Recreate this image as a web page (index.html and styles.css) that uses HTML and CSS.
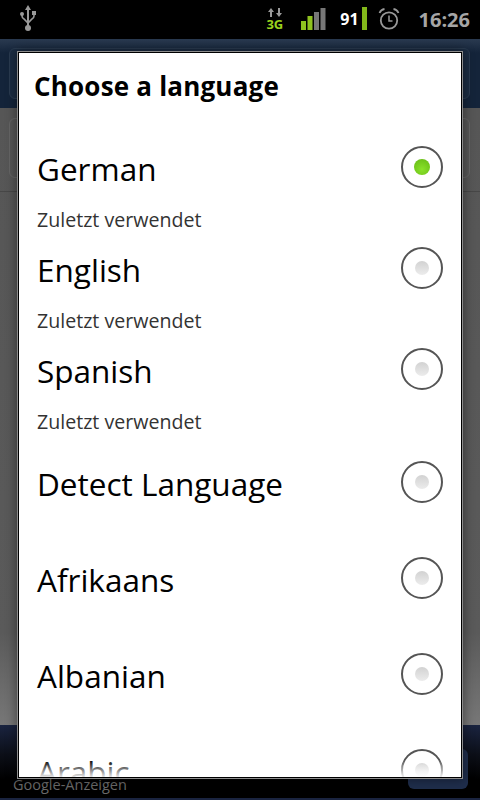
FILE: index.html
```html
<!DOCTYPE html>
<html lang="en">
  <head>
    <meta charset="UTF-8" />
    <title>Choose a language</title>
    <link rel="stylesheet" href="styles.css">
  </head>
  <body>
    <div id="screen">
      <!-- Status bar -->
      <div id="status-bar">
        <svg class="usb" width="18" height="28" viewBox="0 0 18 28">
          <path d="M9 1 L6 6 H8 V22 H10 V6 H12 Z" fill="#999" />
          <circle cx="9" cy="24" r="3" fill="#999" />
          <path d="M3 10 V12 Q3 14 5 15 L9 19 L13 15 Q15 14 15 12 V10" fill="none" stroke="#999" stroke-width="1.6" />
          <circle cx="3" cy="10" r="2" fill="#999" />
          <rect x="13" y="7" width="4" height="4" fill="#999" />
        </svg>
        <div class="status-right">
          <div class="net">
            <svg width="16" height="10" viewBox="0 0 16 10">
              <path d="M4 0 L7 4 H5 V9 H3 V4 H1 Z" fill="#999" />
              <path d="M12 9 L9 5 H11 V0 H13 V5 H15 Z" fill="#999" />
            </svg>
            <span class="net-label">3G</span>
          </div>
          <svg class="signal" width="25" height="22" viewBox="0 0 25 22">
            <rect x="0" y="13" width="5" height="9" fill="#8fc31f" />
            <rect x="6.5" y="8" width="5" height="14" fill="#8fc31f" />
            <rect x="13" y="4" width="5" height="18" fill="#777" />
            <rect x="19.5" y="0" width="5" height="22" fill="#777" />
          </svg>
          <span class="battery-num">91</span>
          <div class="battery-bar"></div>
          <svg class="alarm" width="22" height="22" viewBox="0 0 22 22">
            <circle cx="11" cy="12.5" r="8.2" fill="none" stroke="#999" stroke-width="1.8" />
            <path d="M11 7.5 V13 H14.5" fill="none" stroke="#999" stroke-width="1.5" />
            <path d="M1.5 5 Q3 1.5 6.5 1" fill="none" stroke="#999" stroke-width="1.8" />
            <path d="M20.5 5 Q19 1.5 15.5 1" fill="none" stroke="#999" stroke-width="1.8" />
          </svg>
          <span class="clock">16:26</span>
        </div>
      </div>

      <!-- Dimmed app behind the dialog -->
      <div id="backdrop">
        <div class="app-header">
          <div class="app-field"></div>
        </div>
        <div class="app-body">
          <div class="app-row">
            <div class="app-card"></div>
          </div>
        </div>
        <div class="app-footer">
          <span class="ad-label">Google-Anzeigen</span>
          <div class="ad-button"></div>
        </div>
      </div>

      <!-- Language dialog -->
      <div id="dialog">
        <h1 class="dialog-title">Choose a language</h1>
        <div class="lang-list">
          <div class="lang-item recent">
            <div class="lang-text">
              <span class="lang-name">German</span>
              <span class="lang-sub">Zuletzt verwendet</span>
            </div>
            <div class="radio checked"></div>
          </div>
          <div class="lang-item recent">
            <div class="lang-text">
              <span class="lang-name">English</span>
              <span class="lang-sub">Zuletzt verwendet</span>
            </div>
            <div class="radio"></div>
          </div>
          <div class="lang-item recent">
            <div class="lang-text">
              <span class="lang-name">Spanish</span>
              <span class="lang-sub">Zuletzt verwendet</span>
            </div>
            <div class="radio"></div>
          </div>
          <div class="lang-item">
            <span class="lang-name">Detect Language</span>
            <div class="radio"></div>
          </div>
          <div class="lang-item">
            <span class="lang-name">Afrikaans</span>
            <div class="radio"></div>
          </div>
          <div class="lang-item">
            <span class="lang-name">Albanian</span>
            <div class="radio"></div>
          </div>
          <div class="lang-item">
            <span class="lang-name">Arabic</span>
            <div class="radio"></div>
          </div>
        </div>
        <div class="list-fade"></div>
      </div>
    </div>
  </body>
</html>
```

FILE: styles.css
```css
/* Page */
body {
  margin: 0;
  overflow: hidden;
  background-color: #000;
  font-family: "Open Sans", "DejaVu Sans", sans-serif;
}

#screen {
  position: relative;
  width: 480px;
  height: 800px;
  display: flex;
  flex-direction: column;
  overflow: hidden;
}

/* Status bar */
#status-bar {
  height: 39px;
  flex-shrink: 0;
  display: flex;
  align-items: center;
  justify-content: space-between;
  padding: 0 10px 0 19px;
  background-color: #000;
}

.usb {
  margin-top: -3px;
}

.status-right {
  display: flex;
  align-items: center;
}

.net {
  display: flex;
  flex-direction: column;
  align-items: center;
  margin-right: 18px;
  margin-top: -1px;
}

.net-label {
  font-size: 13px;
  line-height: 12px;
  font-weight: 700;
  color: #9bd21d;
}

.signal {
  margin-right: 14px;
  margin-top: -1px;
}

.battery-num {
  font-size: 16px;
  font-weight: 700;
  color: #fff;
  margin-right: 3px;
  margin-top: -2px;
}

.battery-bar {
  width: 5px;
  height: 23px;
  margin-right: 11px;
  margin-top: -2px;
  background-color: #82b81a;
}

.alarm {
  margin-right: 19px;
  margin-top: -1px;
}

.clock {
  font-size: 20px;
  font-weight: 700;
  color: #a5a5a5;
  margin-top: -1px;
}

/* Dimmed app behind the dialog */
#backdrop {
  flex: 1;
  display: flex;
  flex-direction: column;
}

.app-header {
  height: 69px;
  padding: 9px 10px 0 9px;
  box-sizing: border-box;
  background: linear-gradient(to bottom, #2a3a50, #14243a 20%, #14243a);
}

.app-field {
  height: 49px;
  border: 1px solid #2a3b50;
  border-radius: 6px;
  background-color: #1b2c42;
}

.app-body {
  flex: 1;
  background: linear-gradient(to bottom, #565656, #5a5a5a 85%, #777);
}

.app-row {
  height: 84px;
  padding: 10px 10px 0 9px;
  box-sizing: border-box;
  border-bottom: 1px solid #474747;
}

.app-card {
  height: 58px;
  border: 1px solid #666;
  border-radius: 6px;
}

.app-footer {
  position: relative;
  height: 75px;
  flex-shrink: 0;
  box-sizing: border-box;
  display: flex;
  align-items: flex-end;
  border-bottom: 2px solid #1a2440;
  background: linear-gradient(to bottom, #1a2440, #0c0f18 40%, #000 75%);
}

.ad-label {
  font-size: 14.5px;
  line-height: 16px;
  margin-left: 13px;
  margin-bottom: 5px;
  color: #6a6a6a;
}

.ad-button {
  position: absolute;
  right: 12px;
  bottom: 9px;
  width: 60px;
  height: 40px;
  border-radius: 6px;
  background-color: #1f2e4c;
}

/* Language dialog */
#dialog {
  position: absolute;
  top: 52px;
  left: 18px;
  width: 444px;
  height: 726px;
  box-sizing: border-box;
  overflow: hidden;
  background-color: #fff;
  border: 1px solid #000;
  box-shadow: 0 0 0 1px #8c8c8c, 0 0 10px 2px rgba(0, 0, 0, 0.4);
}

.dialog-title {
  margin: 0;
  padding: 15px 15px 0;
  height: 78px;
  box-sizing: border-box;
  font-size: 26px;
  line-height: 36px;
  font-weight: 700;
  letter-spacing: 0.2px;
  color: #000;
}

.lang-item {
  height: 96px;
  box-sizing: border-box;
  display: flex;
  align-items: center;
  justify-content: space-between;
  padding: 0 18px;
}

.lang-item > .lang-name {
  padding-top: 4px;
}

.lang-item.recent {
  height: 101px;
  align-items: flex-start;
  padding-top: 15px;
}

.lang-text {
  display: flex;
  flex-direction: column;
  gap: 15px;
  padding-top: 1px;
}

.lang-name {
  font-size: 31.5px;
  line-height: 44px;
  color: #000;
}

.lang-sub {
  font-size: 19.6px;
  line-height: 28px;
  color: #333;
}

.radio {
  width: 38px;
  height: 38px;
  flex-shrink: 0;
  display: flex;
  align-items: center;
  justify-content: center;
  border: 2px solid #555;
  border-radius: 50%;
  background-color: #fff;
}

.radio::after {
  content: "";
  width: 14px;
  height: 14px;
  border-radius: 50%;
  background: linear-gradient(to bottom, #d2d2d2, #ececec);
}

.radio.checked::after {
  width: 16px;
  height: 16px;
  background: radial-gradient(circle at 50% 65%, #8ae22a, #64b814);
}

/* Last row fades out at the bottom edge of the dialog */
.list-fade {
  position: absolute;
  left: 0;
  right: 0;
  bottom: 0;
  height: 17px;
  background: linear-gradient(to bottom, rgba(255, 255, 255, 0), rgba(255, 255, 255, 0.9));
}
```
